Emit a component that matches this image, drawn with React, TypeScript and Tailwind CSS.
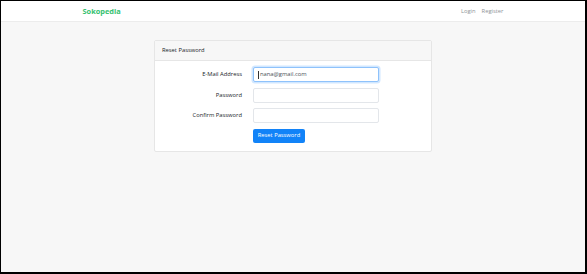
const font = { fontFamily: '"Open Sans", "Liberation Sans", sans-serif' };

function Field({ label, value, focused }: { label: string; value?: string; focused?: boolean }) {
  return (
    <div className="flex items-center">
      <label className="w-[87px] pt-[1px] text-right text-[5.8px] leading-none text-[#212529]">{label}</label>
      <div
        className={`ml-[11px] flex h-[15px] w-[126px] items-center rounded-[2px] border bg-white pl-[4px] text-[5.8px] leading-none text-[#495057] ${
          focused ? "border-[#8ec2fb] shadow-[0_0_0_1.5px_rgba(0,123,255,0.18)]" : "border-[#e3e6ea]"
        }`}
      >
        {focused && <span className="mr-[1px] h-[8px] w-px bg-[#333]" />}
        {value}
      </div>
    </div>
  );
}

export default function App() {
  return (
    <div
      className="flex h-[274px] w-[587px] flex-col overflow-hidden border-t border-l border-r-2 border-b-2 border-black bg-[#f7f7f7] leading-none"
      style={font}
    >
      <nav className="h-[21px] shrink-0 border-b border-[#ececec] bg-white">
        <div className="mx-auto flex h-full w-[421px] items-center justify-between pt-[2px]">
          <span className="text-[7.4px] font-bold text-[#35c16f]">Sokopedia</span>
          <div className="flex gap-[6px] text-[5.8px] text-[#8e9398]">
            <span>Login</span>
            <span>Register</span>
          </div>
        </div>
      </nav>
      <main className="pt-[18px]">
        <div className="mx-auto w-[278px] rounded-[2px] border border-[#e6e6e6] bg-white">
          <div className="flex h-[20px] items-center border-b border-[#e6e6e6] bg-[#f7f7f7] pt-[1px] pl-[7px] text-[5.8px] text-[#212529]">
            Reset Password
          </div>
          <div className="flex flex-col gap-[5.5px] pt-[6px] pb-[8px]">
            <Field label="E-Mail Address" value="nana@gmail.com" focused />
            <Field label="Password" />
            <Field label="Confirm Password" />
            <div className="flex pl-[98px]">
              <button className="flex h-[14px] w-[52px] items-center justify-center rounded-[2px] bg-[#1283f8] text-[5.8px] leading-none text-white">
                Reset Password
              </button>
            </div>
          </div>
        </div>
      </main>
    </div>
  );
}
